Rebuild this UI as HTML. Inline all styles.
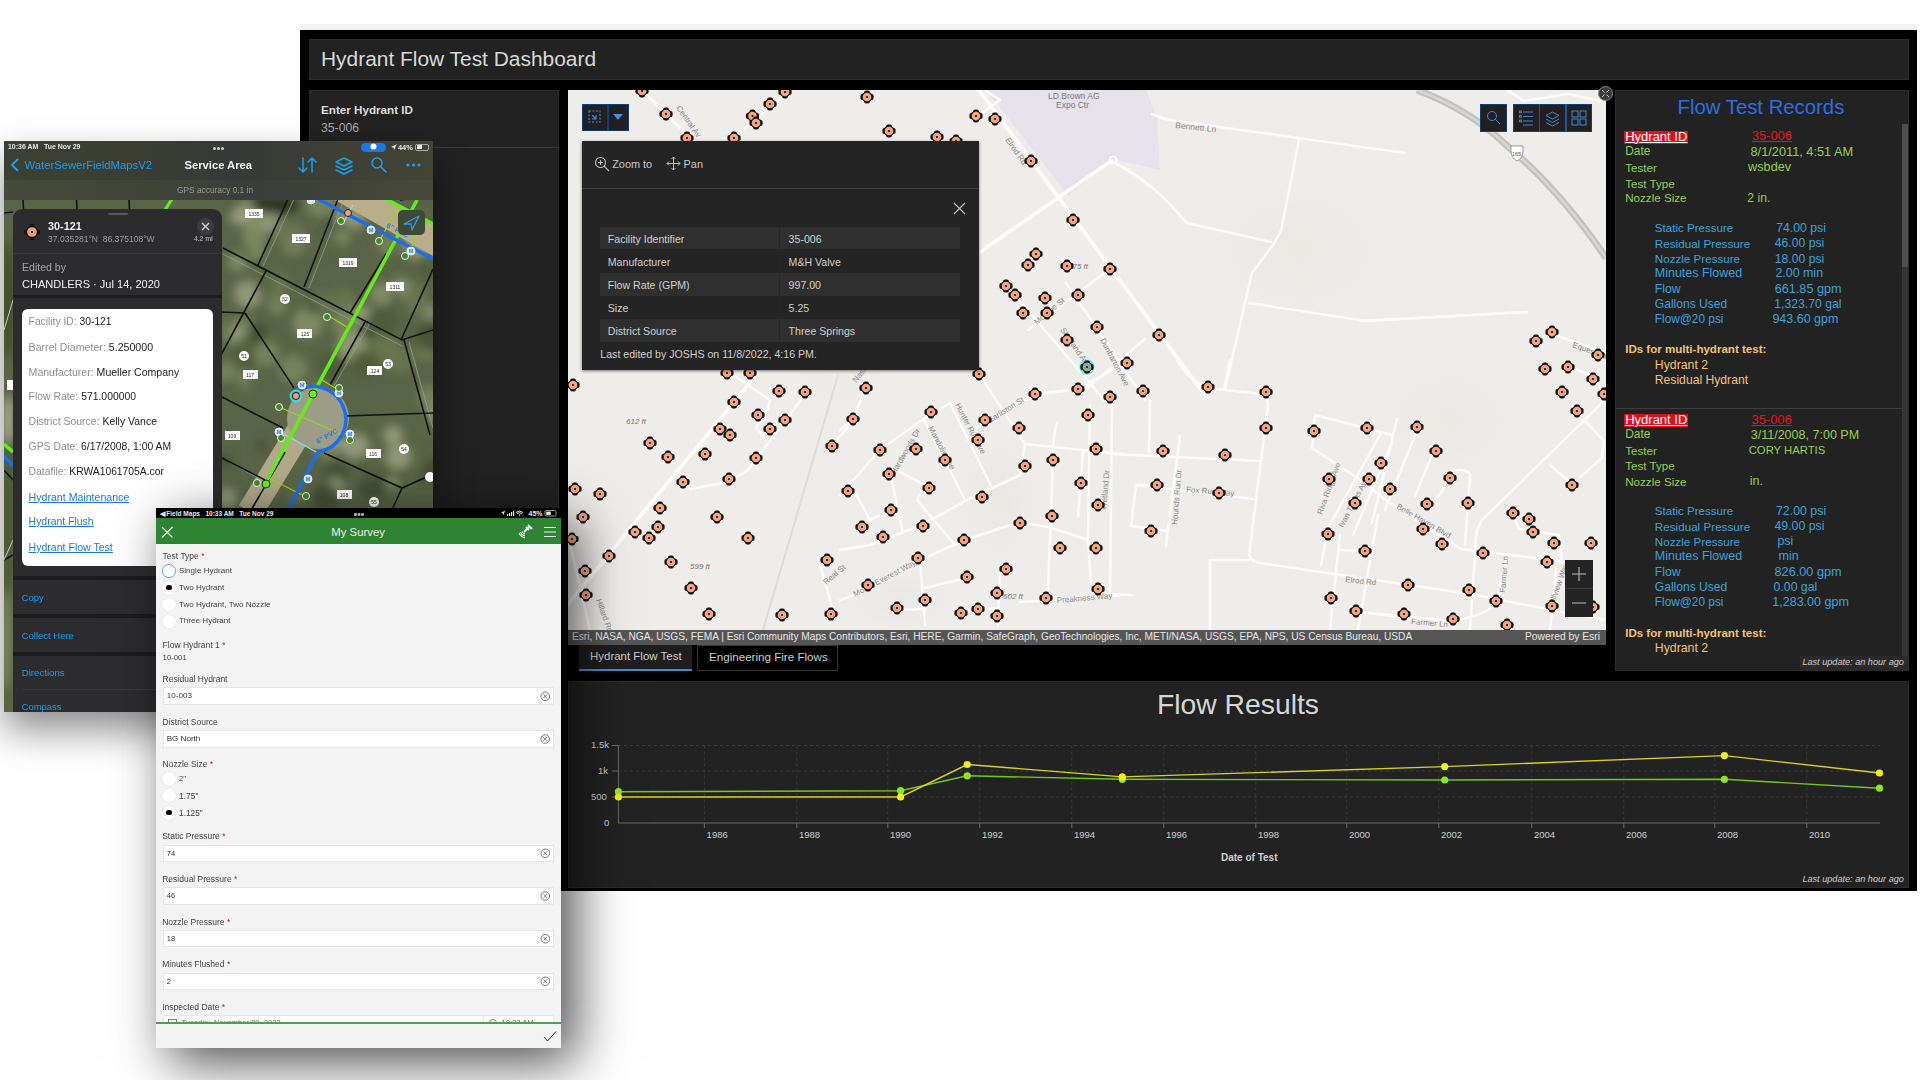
<!DOCTYPE html>
<html><head><meta charset="utf-8">
<style>
*{margin:0;padding:0;box-sizing:border-box}
html,body{width:1920px;height:1080px;overflow:hidden;background:#fff;font-family:"Liberation Sans",sans-serif}
.a{position:absolute}
.t{position:absolute;white-space:nowrap;line-height:1}
#dash{left:300px;top:30px;width:1617px;height:861px;background:#000}
#strip{left:300px;top:24px;width:1617px;height:6px;background:#f3f3f3}
.pn{background:#222222;box-shadow:inset 0 0 0 1px #2c2c2c}
</style></head><body>
<div class="a" id="strip"></div>
<div class="a" id="dash"></div>
<!-- header -->
<div class="a pn" style="left:309px;top:39px;width:1600px;height:41px"></div>
<div class="t" style="left:321px;top:49.3px;font-size:20.91px;color:#d9d9d9">Hydrant Flow Test Dashboard</div>
<!-- left panel -->
<div class="a pn" style="left:309px;top:90px;width:250px;height:798px"></div>
<div class="a" style="left:309px;top:147px;width:250px;height:1px;background:#3a3a3a"></div>
<div class="t" style="left:321px;top:103.9px;font-size:11.67px;font-weight:bold;color:#dcdcdc">Enter Hydrant ID</div>
<div class="t" style="left:321px;top:122.2px;font-size:12.22px;color:#a8a8a8">35-006</div>
<!-- map -->
<svg class="a" style="left:568px;top:90px" width="1038" height="540" viewBox="568 90 1038 540">
<defs><radialGradient id="hs"><stop offset="0" stop-color="#d8d7d2" stop-opacity=".25"/><stop offset="1" stop-color="#d8d7d2" stop-opacity="0"/></radialGradient>
<g id="hy"><rect x="-2.9" y="-6.6" width="5.8" height="13.2" rx="2" fill="#111"/><rect x="-6.6" y="-2.9" width="13.2" height="5.8" rx="2" fill="#111"/><circle r="5.4" fill="#151515"/><circle r="4.3" fill="#f6a584"/><circle r="1.1" fill="#111"/></g></defs>
<rect x="568" y="90" width="1038" height="540" fill="#eeede9"/>
<ellipse cx="580" cy="560" rx="40" ry="90" fill="url(#hs)"/>
<ellipse cx="840" cy="300" rx="60" ry="120" fill="url(#hs)"/>
<ellipse cx="1000" cy="500" rx="40" ry="60" fill="url(#hs)"/>
<ellipse cx="1300" cy="250" rx="80" ry="60" fill="url(#hs)"/>
<ellipse cx="700" cy="200" rx="90" ry="60" fill="url(#hs)"/>
<ellipse cx="1450" cy="420" rx="60" ry="50" fill="url(#hs)"/>
<ellipse cx="900" cy="600" rx="50" ry="30" fill="url(#hs)"/>
<path d="M985 90 L1146 90 L1157 117 L1160 170 L1113 159 L1068 196 L996 102 Z" fill="#e6e2ec"/>
<path d="M838 375 L763 630" stroke="#dcdcd8" stroke-width="2" fill="none"/>
<path d="M1417 90 Q1470 110 1505 144 Q1560 190 1606 258" stroke="#c2c2c0" stroke-width="7" fill="none"/>
<path d="M1417 90 Q1470 110 1505 144 Q1560 190 1606 258" stroke="#d6d6d4" stroke-width="2.5" fill="none"/>
<g fill="none" stroke="#fbfbfa" stroke-linecap="round" stroke-linejoin="round">
<path d="M758 373 L573 598 L560 614" stroke-width="3.8"/>
<path d="M979 90 L1207 398" stroke-width="3.8"/>
<path d="M960 266 L1111 161" stroke-width="3.8"/>
<path d="M642 90 L694 142" stroke-width="2.6"/>
<path d="M734 138 L793 88" stroke-width="2.6"/>
<path d="M733 375 L770 400 L768 408 L756 428 L763 435" stroke-width="2.6"/>
<path d="M803 397 L748 470 L728 482 L690 489" stroke-width="2.6"/>
<path d="M850 425 L830 448" stroke-width="2.6"/>
<path d="M820 565 L833 610" stroke-width="2.6"/>
<path d="M568 535 L590 630" stroke-width="2.6"/>
<path d="M840 600 L855 595 L920 560 L965 540 L1020 522 L1052 528 L1088 540" stroke-width="2.6"/>
<path d="M840 430 L853 419 L866 388" stroke-width="2.6"/>
<path d="M840 495 L880 450 L922 420 L950 403 L992 488" stroke-width="2.6"/>
<path d="M976 428 L1035 395 L1078 389 L1122 365" stroke-width="2.6"/>
<path d="M979 374 L1025 444 L1122 454" stroke-width="2.6"/>
<path d="M1025 444 L1020 475 L967 500 L922 525 L870 545 L840 550" stroke-width="2.6"/>
<path d="M924 420 L965 500" stroke-width="2.6"/>
<path d="M890 472 L903 533" stroke-width="2.6"/>
<path d="M900 472 L925 485 L917 500 L955 545" stroke-width="2.6"/>
<path d="M1057 423 Q1052 440 1053 460 L1048 590" stroke-width="2.6"/>
<path d="M1083 452 L1078 516" stroke-width="2.6"/>
<path d="M1090 405 L1088 540 L1092 598" stroke-width="2.6"/>
<path d="M1020 602 L1122 595" stroke-width="2.6"/>
<path d="M920 560 L925 625" stroke-width="2.6"/>
<path d="M925 588 L965 578" stroke-width="2.6"/>
<path d="M898 610 L925 609" stroke-width="2.6"/>
<path d="M1000 572 L998 625" stroke-width="2.6"/>
<path d="M960 612 L995 608" stroke-width="2.6"/>
<path d="M855 492 L870 520 L890 510" stroke-width="2.6"/>
<path d="M1177 360 Q1190 382 1208 388 L1262 394 Q1268 398 1268 405 L1249 555 Q1252 562 1260 563 L1470 594 L1604 620" stroke-width="2.6"/>
<path d="M1110 454 L1260 461" stroke-width="2.6"/>
<path d="M1230 360 L1224 389" stroke-width="2.6"/>
<path d="M1150 400 L1149 452" stroke-width="2.6"/>
<path d="M1112 405 L1110 595" stroke-width="2.6"/>
<path d="M1160 485 L1136 485 L1131 526 L1168 531" stroke-width="2.6"/>
<path d="M1136 485 L1254 499" stroke-width="2.6"/>
<path d="M1180 436 L1166 546" stroke-width="2.6"/>
<path d="M1210 560 L1210 630" stroke-width="2.6"/>
<path d="M1210 560 L1249 560" stroke-width="2.6"/>
<path d="M1110 594 L1132 595" stroke-width="2.6"/>
<path d="M1315 415 L1392 435" stroke-width="2.6"/>
<path d="M1315 415 L1312 448 L1365 483 L1384 499 L1461 549 L1550 560 L1570 563" stroke-width="2.6"/>
<path d="M1380 435 L1328 528 L1321 565" stroke-width="2.6"/>
<path d="M1392 443 L1353 535" stroke-width="2.6"/>
<path d="M1340 535 L1330 630" stroke-width="2.6"/>
<path d="M1378 515 L1358 630" stroke-width="2.6"/>
<path d="M1340 550 L1365 551" stroke-width="2.6"/>
<path d="M1362 612 L1420 620" stroke-width="2.6"/>
<path d="M1604 401 L1482 520 Q1476 530 1476 538 L1470 630" stroke-width="2.6"/>
<path d="M1360 321 L1527 312" stroke-width="2.6"/>
<path d="M1360 612 L1452 621 Q1490 615 1498 600 L1507 554" stroke-width="2.6"/>
<path d="M1552 334 L1604 352" stroke-width="2.6"/>
<path d="M1568 366 L1592 376 L1604 392" stroke-width="2.6"/>
<path d="M1586 422 L1604 441 L1602 458 L1580 477" stroke-width="2.6"/>
<path d="M1550 465 L1571 483" stroke-width="2.6"/>
<path d="M1513 514 L1519 529 L1559 535 L1562 563" stroke-width="2.6"/>
<path d="M1556 569 L1550 630" stroke-width="2.6"/>
<path d="M1397 419 L1372 523" stroke-width="2.6"/>
<path d="M1418 428 L1385 510" stroke-width="2.6"/>
<path d="M1433 453 L1415 496" stroke-width="2.6"/>
<path d="M1452 471 Q1465 468 1470 474 L1465 545" stroke-width="2.6"/>
<path d="M1451 478 L1436 499" stroke-width="2.6"/>
<path d="M1152 114 Q1165 120 1177 121 L1405 153" stroke-width="2.6"/>
<path d="M1299 140 L1281 231 L1273 245 L1252 273 L1225 389" stroke-width="2.6"/>
<path d="M1111 161 Q1140 175 1166 200 L1187 223 L1271 242" stroke-width="2.6"/>
<path d="M1249 303 L1366 321 L1527 312" stroke-width="2.6"/>
<path d="M1507 90 L1524 101 L1568 94" stroke-width="2.6"/>
<path d="M1568 94 L1606 102" stroke-width="2.6"/>
<path d="M978 116 L1000 100" stroke-width="2.6"/>
<path d="M1028 330 L1110 269" stroke-width="2.6"/>
<path d="M1005 283 L1104 400" stroke-width="2.6"/>
<path d="M1066 283 L1145 400" stroke-width="2.6"/>
<path d="M1145 339 L1087 388 L1034 394" stroke-width="2.6"/>
<path d="M1000 100 L985 90" stroke-width="2.6"/>
</g>
<circle cx="1113" cy="160" r="3.5" fill="none" stroke="#fbfbfa" stroke-width="2"/>
<g font-family="Liberation Sans" fill="#8a8a8a">
<text x="1175" y="128" font-size="8.5" transform="rotate(6 1175 128)">Bennett Ln</text>
<text x="1005" y="140" font-size="8" transform="rotate(55 1005 140)">Elrod Rd</text>
<text x="990" y="423" font-size="8" transform="rotate(-32 990 423)">Earliston St</text>
<text x="955" y="405" font-size="8" transform="rotate(62 955 405)">Hunter Run Ave</text>
<text x="928" y="428" font-size="8" transform="rotate(62 928 428)">Mandolin Ave</text>
<text x="895" y="475" font-size="8" transform="rotate(-60 895 475)">Hardwoods Dr</text>
<text x="855" y="597" font-size="8" transform="rotate(-28 855 597)">Mount Everest Way</text>
<text x="1057" y="603" font-size="8" transform="rotate(-5 1057 603)">Preakness Way</text>
<text x="1106" y="510" font-size="8" transform="rotate(-85 1106 510)">Wetland Dr</text>
<text x="1100" y="340" font-size="8" transform="rotate(62 1100 340)">Dunbarton Ave</text>
<text x="1060" y="330" font-size="8" transform="rotate(55 1060 330)">Shetland Ave</text>
<text x="1037" y="325" font-size="8" transform="rotate(-40 1037 325)">Monroe St</text>
<text x="1186" y="492" font-size="8" transform="rotate(5 1186 492)">Fox Run Way</text>
<text x="1177" y="525" font-size="8" transform="rotate(-85 1177 525)">Hounds Run Dr</text>
<text x="1345" y="582" font-size="8" transform="rotate(6 1345 582)">Elrod Rd</text>
<text x="1322" y="515" font-size="8" transform="rotate(-70 1322 515)">Riva Ridge Ave</text>
<text x="1343" y="528" font-size="8" transform="rotate(-62 1343 528)">Ivan Towns Ave</text>
<text x="1396" y="508" font-size="8" transform="rotate(30 1396 508)">Belle Haven Blvd</text>
<text x="1411" y="624" font-size="8" transform="rotate(5 1411 624)">Farmer Ln</text>
<text x="1505" y="593" font-size="8" transform="rotate(-85 1505 593)">Farmer Ln</text>
<text x="1552" y="610" font-size="8" transform="rotate(-70 1552 610)">Golfview Way</text>
<text x="1572" y="347" font-size="8" transform="rotate(20 1572 347)">Equestrian</text>
<text x="676" y="108" font-size="8" transform="rotate(55 676 108)">Central Av</text>
<text x="596" y="600" font-size="8" transform="rotate(70 596 600)">Hillard Rd</text>
<text x="826" y="585" font-size="8" transform="rotate(-40 826 585)">Real St</text>
<text x="856" y="383" font-size="8" transform="rotate(-50 856 383)">Nash</text>
<text x="1048" y="99" font-size="8.5" fill="#777">LD Brown AG</text><text x="1056" y="108" font-size="8.5" fill="#777">Expo Ctr</text>
<text x="626" y="424" font-size="8" font-style="italic" fill="#777">612 ft</text><text x="690" y="569" font-size="8" font-style="italic" fill="#777">599 ft</text>
<text x="1003" y="599" font-size="8" font-style="italic" fill="#777">602 ft</text><text x="1068" y="269" font-size="8" font-style="italic" fill="#777">675 ft</text>
</g>
<path d="M1511 146 h12 v4 q0 8 -6 11 q-6 -3 -6 -11 z" fill="#fff" stroke="#888" stroke-width=".8"/><text x="1512" y="156" font-size="5.5" font-family="Liberation Sans" fill="#555">165</text>
<use href="#hy" x="727" y="373"/><use href="#hy" x="750" y="373"/><use href="#hy" x="573" y="385"/><use href="#hy" x="779" y="391"/><use href="#hy" x="805" y="392"/><use href="#hy" x="866" y="388"/><use href="#hy" x="979" y="374"/><use href="#hy" x="734" y="402"/><use href="#hy" x="758" y="415"/><use href="#hy" x="785" y="420"/><use href="#hy" x="770" y="429"/><use href="#hy" x="720" y="429"/><use href="#hy" x="730" y="435"/><use href="#hy" x="650" y="443"/><use href="#hy" x="668" y="457"/><use href="#hy" x="705" y="454"/><use href="#hy" x="756" y="458"/><use href="#hy" x="853" y="419"/><use href="#hy" x="832" y="446"/><use href="#hy" x="880" y="450"/><use href="#hy" x="916" y="449"/><use href="#hy" x="931" y="412"/><use href="#hy" x="985" y="420"/><use href="#hy" x="1035" y="394"/><use href="#hy" x="1078" y="389"/><use href="#hy" x="1088" y="415"/><use href="#hy" x="1019" y="428"/><use href="#hy" x="1096" y="449"/><use href="#hy" x="978" y="440"/><use href="#hy" x="945" y="460"/><use href="#hy" x="1053" y="460"/><use href="#hy" x="1025" y="466"/><use href="#hy" x="1081" y="483"/><use href="#hy" x="729" y="479"/><use href="#hy" x="683" y="482"/><use href="#hy" x="575" y="489"/><use href="#hy" x="600" y="494"/><use href="#hy" x="889" y="474"/><use href="#hy" x="848" y="491"/><use href="#hy" x="929" y="488"/><use href="#hy" x="982" y="497"/><use href="#hy" x="660" y="508"/><use href="#hy" x="583" y="517"/><use href="#hy" x="717" y="517"/><use href="#hy" x="891" y="510"/><use href="#hy" x="862" y="527"/><use href="#hy" x="923" y="526"/><use href="#hy" x="883" y="537"/><use href="#hy" x="964" y="540"/><use href="#hy" x="1020" y="523"/><use href="#hy" x="1052" y="516"/><use href="#hy" x="1098" y="505"/><use href="#hy" x="635" y="532"/><use href="#hy" x="658" y="527"/><use href="#hy" x="649" y="538"/><use href="#hy" x="572" y="539"/><use href="#hy" x="748" y="538"/><use href="#hy" x="609" y="556"/><use href="#hy" x="671" y="562"/><use href="#hy" x="827" y="560"/><use href="#hy" x="918" y="558"/><use href="#hy" x="1060" y="548"/><use href="#hy" x="1096" y="548"/><use href="#hy" x="585" y="571"/><use href="#hy" x="1006" y="569"/><use href="#hy" x="967" y="577"/><use href="#hy" x="868" y="585"/><use href="#hy" x="691" y="588"/><use href="#hy" x="586" y="595"/><use href="#hy" x="997" y="593"/><use href="#hy" x="1046" y="598"/><use href="#hy" x="1098" y="589"/><use href="#hy" x="925" y="600"/><use href="#hy" x="897" y="608"/><use href="#hy" x="961" y="613"/><use href="#hy" x="978" y="609"/><use href="#hy" x="997" y="616"/><use href="#hy" x="709" y="614"/><use href="#hy" x="782" y="615"/><use href="#hy" x="831" y="614"/><use href="#hy" x="1127" y="363"/><use href="#hy" x="1208" y="387"/><use href="#hy" x="1266" y="392"/><use href="#hy" x="1143" y="391"/><use href="#hy" x="1110" y="397"/><use href="#hy" x="1266" y="428"/><use href="#hy" x="1314" y="431"/><use href="#hy" x="1367" y="428"/><use href="#hy" x="1417" y="427"/><use href="#hy" x="1436" y="451"/><use href="#hy" x="1163" y="451"/><use href="#hy" x="1225" y="455"/><use href="#hy" x="1381" y="463"/><use href="#hy" x="1329" y="479"/><use href="#hy" x="1369" y="479"/><use href="#hy" x="1390" y="489"/><use href="#hy" x="1450" y="478"/><use href="#hy" x="1572" y="485"/><use href="#hy" x="1577" y="411"/><use href="#hy" x="1562" y="392"/><use href="#hy" x="1593" y="379"/><use href="#hy" x="1545" y="369"/><use href="#hy" x="1568" y="367"/><use href="#hy" x="1604" y="394"/><use href="#hy" x="1157" y="485"/><use href="#hy" x="1219" y="493"/><use href="#hy" x="1355" y="503"/><use href="#hy" x="1427" y="504"/><use href="#hy" x="1468" y="503"/><use href="#hy" x="1513" y="513"/><use href="#hy" x="1529" y="519"/><use href="#hy" x="1533" y="532"/><use href="#hy" x="1423" y="529"/><use href="#hy" x="1328" y="534"/><use href="#hy" x="1151" y="531"/><use href="#hy" x="1442" y="544"/><use href="#hy" x="1365" y="551"/><use href="#hy" x="1483" y="553"/><use href="#hy" x="1554" y="543"/><use href="#hy" x="1591" y="543"/><use href="#hy" x="1547" y="562"/><use href="#hy" x="1408" y="585"/><use href="#hy" x="1469" y="590"/><use href="#hy" x="1331" y="598"/><use href="#hy" x="1496" y="601"/><use href="#hy" x="1552" y="606"/><use href="#hy" x="1593" y="607"/><use href="#hy" x="1356" y="611"/><use href="#hy" x="1404" y="614"/><use href="#hy" x="1453" y="619"/><use href="#hy" x="1507" y="625"/><use href="#hy" x="976" y="116"/><use href="#hy" x="995" y="119"/><use href="#hy" x="1031" y="161"/><use href="#hy" x="1073" y="220"/><use href="#hy" x="1036" y="254"/><use href="#hy" x="1028" y="265"/><use href="#hy" x="1067" y="266"/><use href="#hy" x="1110" y="269"/><use href="#hy" x="1006" y="286"/><use href="#hy" x="1015" y="295"/><use href="#hy" x="1045" y="298"/><use href="#hy" x="1078" y="295"/><use href="#hy" x="1023" y="313"/><use href="#hy" x="1047" y="313"/><use href="#hy" x="1097" y="327"/><use href="#hy" x="1159" y="335"/><use href="#hy" x="1067" y="340"/><use href="#hy" x="1552" y="332"/><use href="#hy" x="1536" y="341"/><use href="#hy" x="1598" y="355"/><use href="#hy" x="642" y="91"/><use href="#hy" x="666" y="114"/><use href="#hy" x="687" y="138"/><use href="#hy" x="734" y="138"/><use href="#hy" x="770" y="104"/><use href="#hy" x="785" y="92"/><use href="#hy" x="867" y="97"/><use href="#hy" x="889" y="131"/><use href="#hy" x="937" y="137"/><use href="#hy" x="752.5" y="116"/><use href="#hy" x="756" y="123"/><use href="#hy" x="956" y="141"/>
<circle cx="1087" cy="367" r="7.5" fill="#30e8f0" opacity=".85"/><use href="#hy" x="1087" y="367"/><circle cx="1087" cy="367" r="4.2" fill="#9aa88a"/><circle cx="1087" cy="367" r="1.1" fill="#111"/>
</svg>
<div class="a" style="left:568px;top:630px;width:1038px;height:15px;background:#555"></div>
<div class="t" style="left:572px;top:632.4px;font-size:10.19px;color:#e8e8e8">Esri, NASA, NGA, USGS, FEMA | Esri Community Maps Contributors, Esri, HERE, Garmin, SafeGraph, GeoTechnologies, Inc, METI/NASA, USGS, EPA, NPS, US Census Bureau, USDA</div>
<div class="t" style="left:1525px;top:632.3px;font-size:10.3px;color:#e8e8e8">Powered by Esri</div>
<!-- popup -->
<div class="a" style="left:581.7px;top:141px;width:397px;height:229.3px;background:#242424;box-shadow:0 1px 3px rgba(0,0,0,.5)"></div>
<svg class="a" style="left:594px;top:156px" width="16" height="16" viewBox="0 0 16 16"><g fill="none" stroke="#bdbdbd" stroke-width="1.1"><circle cx="6.5" cy="6.5" r="5"/><path d="M10 10 L15 15 M4 6.5 H9 M6.5 4 V9"/></g></svg>
<div class="t" style="left:612.2px;top:158.8px;font-size:10.9px;color:#c8c8c8">Zoom to</div>
<svg class="a" style="left:666px;top:156px" width="15" height="15" viewBox="0 0 15 15"><g fill="none" stroke="#bdbdbd" stroke-width="1"><path d="M7.5 1 V14 M1 7.5 H14 M5.5 3 L7.5 1 L9.5 3 M5.5 12 L7.5 14 L9.5 12 M3 5.5 L1 7.5 L3 9.5 M12 5.5 L14 7.5 L12 9.5"/></g></svg>
<div class="t" style="left:683.6px;top:158.8px;font-size:10.9px;color:#c8c8c8">Pan</div>
<div class="a" style="left:582px;top:188px;width:396px;height:1px;background:#3c3c3c"></div>
<svg class="a" style="left:952px;top:201px" width="15" height="15" viewBox="0 0 15 15"><path d="M2 2 L13 13 M13 2 L2 13" stroke="#bdbdbd" stroke-width="1.2"/></svg>
<div class="a" style="left:600.3px;top:226.7px;width:359.7px;height:22.7px;background:#2f2f2f"></div>
<div class="a" style="left:600.3px;top:272.5px;width:359.7px;height:23.3px;background:#2f2f2f"></div>
<div class="a" style="left:600.3px;top:318.9px;width:359.7px;height:23.6px;background:#2f2f2f"></div>
<div class="a" style="left:779.4px;top:226.7px;width:1px;height:115.8px;background:#262626"></div>
<div class="t" style="left:607.8px;top:233.5px;font-size:10.6px;color:#cfcfcf">Facility Identifier</div>
<div class="t" style="left:788.6px;top:233.5px;font-size:10.6px;color:#cfcfcf">35-006</div>
<div class="t" style="left:607.8px;top:256.6px;font-size:10.6px;color:#cfcfcf">Manufacturer</div>
<div class="t" style="left:788.6px;top:256.6px;font-size:10.6px;color:#cfcfcf">M&amp;H Valve</div>
<div class="t" style="left:607.8px;top:279.9px;font-size:10.6px;color:#cfcfcf">Flow Rate (GPM)</div>
<div class="t" style="left:788.6px;top:279.9px;font-size:10.6px;color:#cfcfcf">997.00</div>
<div class="t" style="left:607.8px;top:303.0px;font-size:10.6px;color:#cfcfcf">Size</div>
<div class="t" style="left:788.6px;top:303.0px;font-size:10.6px;color:#cfcfcf">5.25</div>
<div class="t" style="left:607.8px;top:326.0px;font-size:10.6px;color:#cfcfcf">District Source</div>
<div class="t" style="left:788.6px;top:326.0px;font-size:10.6px;color:#cfcfcf">Three Springs</div>
<div class="t" style="left:600.3px;top:348.8px;font-size:10.6px;color:#cfcfcf">Last edited by JOSHS on 11/8/2022, 4:16 PM.</div>
<!-- toolbar -->
<div class="a" style="left:581.7px;top:103.6px;width:47.7px;height:27.8px;background:#211f1f;border:1.5px solid #0d3f74"></div>
<div class="a" style="left:607px;top:104px;width:1.5px;height:27px;background:#0d3f74"></div>
<svg class="a" style="left:587px;top:109px" width="16" height="16" viewBox="0 0 16 16"><g fill="none" stroke="#3a8ee8" stroke-width="1.1"><rect x="2" y="2" width="11" height="11" stroke-dasharray="2 1.5"/><path d="M5 6 L9 10 M9 6 L9 10 L5 10"/></g></svg>
<svg class="a" style="left:612px;top:113px" width="12" height="8" viewBox="0 0 12 8"><path d="M1 1 L11 1 L6 7 Z" fill="#3a8ee8"/></svg>
<div class="a" style="left:1480px;top:104px;width:27px;height:28px;background:#211f1f;border:1.5px solid #0d3f74"></div>
<svg class="a" style="left:1484px;top:108px" width="20" height="20" viewBox="0 0 20 20"><g fill="none" stroke="#4a88d0" stroke-width="1"><circle cx="8" cy="8" r="4.5"/><path d="M11.5 11.5 L16 16"/></g></svg>
<div class="a" style="left:1513px;top:104px;width:79px;height:28px;background:#211f1f;border:1.5px solid #0d3f74"></div>
<div class="a" style="left:1538.7px;top:104px;width:1.5px;height:28px;background:#1a5a9a"></div>
<div class="a" style="left:1565px;top:104px;width:1.5px;height:28px;background:#1a5a9a"></div>
<svg class="a" style="left:1513px;top:104px" width="79" height="28" viewBox="0 0 79 28"><g fill="none" stroke="#4a90e0" stroke-width=".9">
<path d="M10 8 H20 M10 12.5 H20 M10 17 H20 M10 21 H20"/><rect x="6.5" y="7" width="1.8" height="1.8"/><rect x="6.5" y="11.5" width="1.8" height="1.8"/><rect x="6.5" y="16" width="1.8" height="1.8"/>
<path d="M39.5 8 L46 11.5 L39.5 15 L33 11.5 Z M33 15 L39.5 18.5 L46 15 M33 18.5 L39.5 22 L46 18.5"/>
<rect x="59" y="7" width="6" height="6"/><rect x="67" y="7" width="6" height="6"/><rect x="59" y="15" width="6" height="6"/><rect x="67" y="15" width="6" height="6"/>
</g></svg>
<div class="a" style="left:1598px;top:86px;width:15px;height:15px;border-radius:50%;background:#3a3a3a;border:1px solid #888"></div>
<svg class="a" style="left:1598px;top:86px" width="15" height="15" viewBox="0 0 15 15"><path d="M4 4 L6.5 6.5 M11 4 L8.5 6.5 M4 11 L6.5 8.5 M11 11 L8.5 8.5" stroke="#ccc" stroke-width="1"/></svg>
<!-- map zoom -->
<div class="a" style="left:1565px;top:560px;width:28px;height:57px;background:#242424"></div>
<div class="a" style="left:1565px;top:588px;width:28px;height:1px;background:#3a3a3a"></div>
<svg class="a" style="left:1565px;top:560px" width="28" height="57" viewBox="0 0 28 57"><path d="M14 7 V21 M7 14 H21 M7 43 H21" stroke="#bbb" stroke-width="1.1"/></svg>
<!-- right panel -->
<div class="a pn" style="left:1615px;top:90px;width:294px;height:580.5px"></div>
<div class="t" style="left:1677.6px;top:96.8px;font-size:20.32px;color:#2f6de0">Flow Test Records</div>
<div class="a" style="left:1901.6px;top:124.4px;width:6.5px;height:534px;background:#353535"></div>
<div class="a" style="left:1901.6px;top:124.4px;width:6.5px;height:142.3px;background:#4e4e4e"></div>
<div class="a" style="left:1615px;top:408.2px;width:287px;height:1px;background:#3d3d3d"></div>
<div class="a" style="left:1624.2px;top:131px;width:64px;height:12.7px;background:#e0101a"></div>
<div class="a" style="left:1624.4px;top:413.5px;width:63.4px;height:13.2px;background:#e0101a"></div>
<div class="a" style="left:1799.5px;top:656.4px;width:109px;height:14.3px;background:#2a2a2a"></div>
<div class="t" style="left:1625.2px;top:129.7px;font-size:13.01px;color:#fff;text-decoration:underline">Hydrant ID</div>
<div class="t" style="left:1751.7px;top:129.7px;font-size:12.94px;color:#e8101a;text-decoration:underline">35-006</div>
<div class="t" style="left:1625.2px;top:146.3px;font-size:11.92px;color:#96d04a">Date</div>
<div class="t" style="left:1625.2px;top:162.0px;font-size:11.64px;color:#96d04a">Tester</div>
<div class="t" style="left:1625.2px;top:177.5px;font-size:11.61px;color:#96d04a">Test Type</div>
<div class="t" style="left:1625.2px;top:192.2px;font-size:11.61px;color:#96d04a">Nozzle Size</div>
<div class="t" style="left:1750.5px;top:145.6px;font-size:12.78px;color:#96d04a">8/1/2011, 4:51 AM</div>
<div class="t" style="left:1748.1px;top:161.2px;font-size:12.68px;color:#96d04a">wsbdev</div>
<div class="t" style="left:1747.3px;top:191.7px;font-size:12.22px;color:#96d04a">2 in.</div>
<div class="t" style="left:1654.8px;top:222.8px;font-size:11.58px;color:#3aa2da">Static Pressure</div>
<div class="t" style="left:1654.8px;top:237.8px;font-size:11.68px;color:#3aa2da">Residual Pressure</div>
<div class="t" style="left:1654.8px;top:253.0px;font-size:11.63px;color:#3aa2da">Nozzle Pressure</div>
<div class="t" style="left:1654.8px;top:267.3px;font-size:12.48px;color:#3aa2da">Minutes Flowed</div>
<div class="t" style="left:1654.8px;top:283.0px;font-size:12.21px;color:#3aa2da">Flow</div>
<div class="t" style="left:1654.8px;top:298.2px;font-size:12.09px;color:#3aa2da">Gallons Used</div>
<div class="t" style="left:1654.8px;top:313.9px;font-size:11.85px;color:#3aa2da">Flow@20 psi</div>
<div class="t" style="left:1776.3px;top:222.2px;font-size:12.24px;color:#3aa2da">74.00 psi</div>
<div class="t" style="left:1774.8px;top:237.4px;font-size:12.19px;color:#3aa2da">46.00 psi</div>
<div class="t" style="left:1774.8px;top:252.5px;font-size:12.19px;color:#3aa2da">18.00 psi</div>
<div class="t" style="left:1775.4px;top:267.4px;font-size:12.43px;color:#3aa2da">2.00 min</div>
<div class="t" style="left:1774.8px;top:282.6px;font-size:12.63px;color:#3aa2da">661.85 gpm</div>
<div class="t" style="left:1774.2px;top:298.1px;font-size:12.22px;color:#3aa2da">1,323.70 gal</div>
<div class="t" style="left:1772.4px;top:313.3px;font-size:12.51px;color:#3aa2da">943.60 gpm</div>
<div class="t" style="left:1625.2px;top:344.2px;font-size:11.56px;font-weight:bold;color:#f2c374">IDs for multi-hydrant test:</div>
<div class="t" style="left:1654.8px;top:359.1px;font-size:12.29px;color:#f2c374">Hydrant 2</div>
<div class="t" style="left:1654.8px;top:374.3px;font-size:12.16px;color:#f2c374">Residual Hydrant</div>
<div class="t" style="left:1625.2px;top:413.4px;font-size:13.01px;color:#fff;text-decoration:underline">Hydrant ID</div>
<div class="t" style="left:1751.5px;top:413.5px;font-size:12.91px;color:#e8101a;text-decoration:underline">35-006</div>
<div class="t" style="left:1625.2px;top:429.3px;font-size:11.92px;color:#96d04a">Date</div>
<div class="t" style="left:1625.2px;top:445.0px;font-size:11.64px;color:#96d04a">Tester</div>
<div class="t" style="left:1625.2px;top:460.0px;font-size:11.61px;color:#96d04a">Test Type</div>
<div class="t" style="left:1625.2px;top:475.5px;font-size:11.61px;color:#96d04a">Nozzle Size</div>
<div class="t" style="left:1750.7px;top:428.8px;font-size:12.54px;color:#96d04a">3/11/2008, 7:00 PM</div>
<div class="t" style="left:1748.7px;top:445.3px;font-size:11.3px;color:#96d04a">CORY HARTIS</div>
<div class="t" style="left:1749.8px;top:474.7px;font-size:12.49px;color:#96d04a">in.</div>
<div class="t" style="left:1654.8px;top:505.9px;font-size:11.58px;color:#3aa2da">Static Pressure</div>
<div class="t" style="left:1654.8px;top:520.7px;font-size:11.68px;color:#3aa2da">Residual Pressure</div>
<div class="t" style="left:1654.8px;top:536.1px;font-size:11.63px;color:#3aa2da">Nozzle Pressure</div>
<div class="t" style="left:1654.8px;top:550.4px;font-size:12.48px;color:#3aa2da">Minutes Flowed</div>
<div class="t" style="left:1654.8px;top:566.3px;font-size:12.21px;color:#3aa2da">Flow</div>
<div class="t" style="left:1654.8px;top:581.3px;font-size:12.09px;color:#3aa2da">Gallons Used</div>
<div class="t" style="left:1654.8px;top:596.7px;font-size:11.85px;color:#3aa2da">Flow@20 psi</div>
<div class="t" style="left:1776.0px;top:505.2px;font-size:12.37px;color:#3aa2da">72.00 psi</div>
<div class="t" style="left:1774.5px;top:520.2px;font-size:12.32px;color:#3aa2da">49.00 psi</div>
<div class="t" style="left:1777.4px;top:535.4px;font-size:12.36px;color:#3aa2da">psi</div>
<div class="t" style="left:1778.5px;top:550.4px;font-size:12.47px;color:#3aa2da">min</div>
<div class="t" style="left:1774.5px;top:565.8px;font-size:12.72px;color:#3aa2da">826.00 gpm</div>
<div class="t" style="left:1773.6px;top:581.1px;font-size:12.28px;color:#3aa2da">0.00 gal</div>
<div class="t" style="left:1772.2px;top:596.1px;font-size:12.57px;color:#3aa2da">1,283.00 gpm</div>
<div class="t" style="left:1625.2px;top:627.6px;font-size:11.56px;font-weight:bold;color:#f2c374">IDs for multi-hydrant test:</div>
<div class="t" style="left:1654.8px;top:642.2px;font-size:12.29px;color:#f2c374">Hydrant 2</div>
<div class="t" style="left:1802.4px;top:657.8px;font-size:9.15px;font-style:italic;color:#cfcfcf">Last update: an hour ago</div>
<!-- tabs -->
<div class="a" style="left:579px;top:644.5px;width:113px;height:26.5px;background:#1e1e1e;border-bottom:2px solid #3b8de0"></div>
<div class="a" style="left:697px;top:644.5px;width:141px;height:26.5px;border:1px solid #333"></div>
<div class="t" style="left:590px;top:651px;font-size:11.47px;color:#cfcfcf">Hydrant Flow Test</div>
<div class="t" style="left:709px;top:650.8px;font-size:11.61px;color:#cfcfcf">Engineering Fire Flows</div>
<!-- chart panel -->
<div class="a pn" style="left:567.5px;top:680.5px;width:1341.5px;height:207px"></div>
<div class="t" style="left:1157px;top:689.8px;font-size:28.31px;color:#d6d6d6">Flow Results</div>
<svg class="a" style="left:567px;top:680px" width="1342" height="208" viewBox="567 680 1342 208">
<g stroke="#3a3a3a" stroke-width="1" stroke-dasharray="3 3" fill="none">
<path d="M618 745.5 H1880 M618 771 H1880 M618 797 H1880"/>
<path d="M704.4 745.5 V823"/><path d="M796.8 745.5 V823"/><path d="M887.8 745.5 V823"/><path d="M979.8 745.5 V823"/><path d="M1071.8 745.5 V823"/><path d="M1163.8 745.5 V823"/><path d="M1255.8 745.5 V823"/><path d="M1346.8 745.5 V823"/><path d="M1438.8 745.5 V823"/><path d="M1531.8 745.5 V823"/><path d="M1623.8 745.5 V823"/><path d="M1714.8 745.5 V823"/><path d="M1806.8 745.5 V823"/></g>
<g stroke="#6a6a6a" stroke-width="1"><path d="M618 823 H1880"/><path d="M618.4 745 V823"/><path d="M612 745.5 H618 M612 771 H618 M612 797 H618"/>
<path d="M704.4 823 V828"/><path d="M796.8 823 V828"/><path d="M887.8 823 V828"/><path d="M979.8 823 V828"/><path d="M1071.8 823 V828"/><path d="M1163.8 823 V828"/><path d="M1255.8 823 V828"/><path d="M1346.8 823 V828"/><path d="M1438.8 823 V828"/><path d="M1531.8 823 V828"/><path d="M1623.8 823 V828"/><path d="M1714.8 823 V828"/><path d="M1806.8 823 V828"/></g>
<polyline fill="none" stroke="#74c81c" stroke-width="1.4" points="618.4,791.7 900.6,790.7 967.2,775.8 1122.3,779.3 1444.7,780.0 1724.4,779.3 1879.5,788.2"/>
<polyline fill="none" stroke="#d8d21c" stroke-width="1.4" points="618.4,797.0 900.6,797.0 967.2,764.5 1122.3,776.9 1444.7,766.6 1724.4,755.6 1879.5,773.0"/>
<circle cx="618.4" cy="791.7" r="3.6" fill="#8ae81a"/><circle cx="900.6" cy="790.7" r="3.6" fill="#8ae81a"/><circle cx="967.2" cy="775.8" r="3.6" fill="#8ae81a"/><circle cx="1122.3" cy="779.3" r="3.6" fill="#8ae81a"/><circle cx="1444.7" cy="780.0" r="3.6" fill="#8ae81a"/><circle cx="1724.4" cy="779.3" r="3.6" fill="#8ae81a"/><circle cx="1879.5" cy="788.2" r="3.6" fill="#8ae81a"/>
<circle cx="618.4" cy="797.0" r="3.6" fill="#f2ee1a"/><circle cx="900.6" cy="797.0" r="3.6" fill="#f2ee1a"/><circle cx="967.2" cy="764.5" r="3.6" fill="#f2ee1a"/><circle cx="1122.3" cy="776.9" r="3.6" fill="#f2ee1a"/><circle cx="1444.7" cy="766.6" r="3.6" fill="#f2ee1a"/><circle cx="1724.4" cy="755.6" r="3.6" fill="#f2ee1a"/><circle cx="1879.5" cy="773.0" r="3.6" fill="#f2ee1a"/>
</svg>
<div class="t" style="left:591px;top:740px;font-size:9.5px;color:#cfcfcf">1.5k</div>
<div class="t" style="left:598px;top:766px;font-size:9.5px;color:#cfcfcf">1k</div>
<div class="t" style="left:591px;top:792px;font-size:9.5px;color:#cfcfcf">500</div>
<div class="t" style="left:604px;top:818px;font-size:9.5px;color:#cfcfcf">0</div>
<div class="t" style="left:706.6px;top:830px;font-size:9.5px;color:#cfcfcf">1986</div>
<div class="t" style="left:799.0px;top:830px;font-size:9.5px;color:#cfcfcf">1988</div>
<div class="t" style="left:890.0px;top:830px;font-size:9.5px;color:#cfcfcf">1990</div>
<div class="t" style="left:982.0px;top:830px;font-size:9.5px;color:#cfcfcf">1992</div>
<div class="t" style="left:1074.0px;top:830px;font-size:9.5px;color:#cfcfcf">1994</div>
<div class="t" style="left:1166.0px;top:830px;font-size:9.5px;color:#cfcfcf">1996</div>
<div class="t" style="left:1258.0px;top:830px;font-size:9.5px;color:#cfcfcf">1998</div>
<div class="t" style="left:1349.0px;top:830px;font-size:9.5px;color:#cfcfcf">2000</div>
<div class="t" style="left:1441.0px;top:830px;font-size:9.5px;color:#cfcfcf">2002</div>
<div class="t" style="left:1534.0px;top:830px;font-size:9.5px;color:#cfcfcf">2004</div>
<div class="t" style="left:1626.0px;top:830px;font-size:9.5px;color:#cfcfcf">2006</div>
<div class="t" style="left:1717.0px;top:830px;font-size:9.5px;color:#cfcfcf">2008</div>
<div class="t" style="left:1809.0px;top:830px;font-size:9.5px;color:#cfcfcf">2010</div>
<div class="t" style="left:1221px;top:853px;font-size:10px;font-weight:bold;color:#cfcfcf">Date of Test</div>
<div class="t" style="left:1802.4px;top:875px;font-size:9.15px;font-style:italic;color:#cfcfcf">Last update: an hour ago</div>
<!-- mobile app -->
<div class="a" style="left:4px;top:141px;width:429px;height:571px;background:#56604a;box-shadow:0 18px 36px rgba(0,0,0,.45)"></div>
<svg class="a" style="left:4px;top:141px" width="429" height="571" viewBox="4 141 429 571">
<defs>
<radialGradient id="g1" cx="50%" cy="50%" r="50%"><stop offset="0" stop-color="#a9aa90" stop-opacity=".9"/><stop offset="1" stop-color="#a9aa90" stop-opacity="0"/></radialGradient>
<radialGradient id="g2" cx="50%" cy="50%" r="50%"><stop offset="0" stop-color="#34402c" stop-opacity=".9"/><stop offset="1" stop-color="#34402c" stop-opacity="0"/></radialGradient>
<radialGradient id="g3" cx="50%" cy="50%" r="50%"><stop offset="0" stop-color="#7e876a" stop-opacity=".9"/><stop offset="1" stop-color="#7e876a" stop-opacity="0"/></radialGradient>
</defs>
<rect x="4" y="141" width="429" height="571" fill="#5a6547"/>
<filter id="bl" x="-50%" y="-50%" width="200%" height="200%"><feGaussianBlur stdDeviation="5"/></filter>
<g filter="url(#bl)">
<circle cx="293" cy="243" r="12" fill="#808c62" opacity=".75"/><circle cx="401" cy="225" r="11" fill="#6b7a50" opacity=".75"/><circle cx="269" cy="223" r="10" fill="#a2a886" opacity=".75"/><circle cx="242" cy="331" r="14" fill="#808c62" opacity=".75"/><circle cx="429" cy="397" r="11" fill="#808c62" opacity=".75"/><circle cx="348" cy="322" r="16" fill="#808c62" opacity=".75"/><circle cx="343" cy="238" r="10" fill="#6b7a50" opacity=".75"/><circle cx="248" cy="294" r="14" fill="#a2a886" opacity=".75"/><circle cx="244" cy="378" r="7" fill="#808c62" opacity=".75"/><circle cx="341" cy="215" r="6" fill="#a2a886" opacity=".75"/><circle cx="330" cy="365" r="14" fill="#4a5936" opacity=".75"/><circle cx="350" cy="340" r="8" fill="#56663e" opacity=".75"/><circle cx="261" cy="445" r="6" fill="#3c482c" opacity=".75"/><circle cx="336" cy="475" r="13" fill="#3c482c" opacity=".75"/><circle cx="355" cy="218" r="11" fill="#a2a886" opacity=".75"/><circle cx="387" cy="244" r="10" fill="#808c62" opacity=".75"/><circle cx="432" cy="220" r="11" fill="#56663e" opacity=".75"/><circle cx="413" cy="295" r="13" fill="#6b7a50" opacity=".75"/><circle cx="330" cy="450" r="6" fill="#808c62" opacity=".75"/><circle cx="428" cy="347" r="12" fill="#808c62" opacity=".75"/><circle cx="381" cy="294" r="11" fill="#8f9a70" opacity=".75"/><circle cx="401" cy="286" r="9" fill="#8f9a70" opacity=".75"/><circle cx="298" cy="496" r="9" fill="#6b7a50" opacity=".75"/><circle cx="248" cy="214" r="13" fill="#a2a886" opacity=".75"/><circle cx="383" cy="322" r="15" fill="#4a5936" opacity=".75"/><circle cx="240" cy="339" r="11" fill="#a2a886" opacity=".75"/><circle cx="401" cy="471" r="8" fill="#4a5936" opacity=".75"/><circle cx="437" cy="413" r="9" fill="#a2a886" opacity=".75"/><circle cx="255" cy="251" r="8" fill="#a2a886" opacity=".75"/><circle cx="225" cy="461" r="7" fill="#3c482c" opacity=".75"/><circle cx="223" cy="329" r="9" fill="#6b7a50" opacity=".75"/><circle cx="291" cy="235" r="14" fill="#6b7a50" opacity=".75"/><circle cx="365" cy="432" r="10" fill="#56663e" opacity=".75"/><circle cx="392" cy="475" r="14" fill="#4a5936" opacity=".75"/><circle cx="309" cy="321" r="10" fill="#4a5936" opacity=".75"/><circle cx="236" cy="217" r="7" fill="#a2a886" opacity=".75"/><circle cx="246" cy="387" r="6" fill="#6b7a50" opacity=".75"/><circle cx="255" cy="227" r="9" fill="#808c62" opacity=".75"/><circle cx="237" cy="262" r="9" fill="#8f9a70" opacity=".75"/><circle cx="277" cy="306" r="9" fill="#808c62" opacity=".75"/><circle cx="247" cy="351" r="16" fill="#4a5936" opacity=".75"/><circle cx="327" cy="222" r="6" fill="#3c482c" opacity=".75"/><circle cx="383" cy="348" r="13" fill="#6b7a50" opacity=".75"/><circle cx="227" cy="499" r="11" fill="#a2a886" opacity=".75"/><circle cx="372" cy="488" r="13" fill="#3c482c" opacity=".75"/><circle cx="435" cy="471" r="13" fill="#3c482c" opacity=".75"/><circle cx="335" cy="486" r="9" fill="#a2a886" opacity=".75"/><circle cx="338" cy="444" r="9" fill="#a2a886" opacity=".75"/><circle cx="356" cy="447" r="13" fill="#a2a886" opacity=".75"/><circle cx="398" cy="457" r="13" fill="#a2a886" opacity=".75"/><circle cx="266" cy="353" r="13" fill="#808c62" opacity=".75"/><circle cx="394" cy="346" r="7" fill="#6b7a50" opacity=".75"/><circle cx="431" cy="338" r="15" fill="#3c482c" opacity=".75"/><circle cx="430" cy="312" r="7" fill="#a2a886" opacity=".75"/><circle cx="324" cy="303" r="10" fill="#6b7a50" opacity=".75"/><circle cx="405" cy="348" r="12" fill="#56663e" opacity=".75"/><circle cx="362" cy="462" r="6" fill="#4a5936" opacity=".75"/><circle cx="393" cy="435" r="10" fill="#a2a886" opacity=".75"/><circle cx="317" cy="398" r="6" fill="#8f9a70" opacity=".75"/><circle cx="308" cy="323" r="15" fill="#8f9a70" opacity=".75"/><circle cx="257" cy="513" r="5" fill="#6b7a50" opacity=".75"/><circle cx="419" cy="453" r="7" fill="#56663e" opacity=".75"/><circle cx="352" cy="347" r="15" fill="#a2a886" opacity=".75"/><circle cx="342" cy="237" r="5" fill="#8f9a70" opacity=".75"/><circle cx="364" cy="364" r="15" fill="#4a5936" opacity=".75"/><circle cx="437" cy="257" r="15" fill="#808c62" opacity=".75"/><circle cx="277" cy="289" r="8" fill="#6b7a50" opacity=".75"/><circle cx="293" cy="369" r="14" fill="#808c62" opacity=".75"/><circle cx="420" cy="308" r="10" fill="#6b7a50" opacity=".75"/><circle cx="400" cy="360" r="14" fill="#6b7a50" opacity=".75"/><circle cx="251" cy="244" r="11" fill="#56663e" opacity=".75"/><circle cx="318" cy="254" r="5" fill="#56663e" opacity=".75"/><circle cx="255" cy="240" r="12" fill="#808c62" opacity=".75"/><circle cx="343" cy="299" r="11" fill="#6b7a50" opacity=".75"/><circle cx="327" cy="443" r="15" fill="#808c62" opacity=".75"/><circle cx="276" cy="284" r="13" fill="#6b7a50" opacity=".75"/><circle cx="321" cy="204" r="15" fill="#808c62" opacity=".75"/><circle cx="319" cy="391" r="11" fill="#6b7a50" opacity=".75"/><circle cx="265" cy="284" r="11" fill="#56663e" opacity=".75"/><circle cx="326" cy="496" r="13" fill="#3c482c" opacity=".75"/><circle cx="423" cy="481" r="7" fill="#4a5936" opacity=".75"/><circle cx="252" cy="234" r="10" fill="#808c62" opacity=".75"/><circle cx="368" cy="332" r="7" fill="#3c482c" opacity=".75"/><circle cx="393" cy="482" r="7" fill="#8f9a70" opacity=".75"/><circle cx="362" cy="312" r="8" fill="#a2a886" opacity=".75"/><circle cx="433" cy="265" r="15" fill="#4a5936" opacity=".75"/><circle cx="415" cy="247" r="12" fill="#a2a886" opacity=".75"/><circle cx="257" cy="333" r="11" fill="#3c482c" opacity=".75"/><circle cx="314" cy="309" r="6" fill="#3c482c" opacity=".75"/><circle cx="226" cy="372" r="10" fill="#808c62" opacity=".75"/>
<ellipse cx="275" cy="205" rx="25" ry="8" fill="#2e3222"/>
<ellipse cx="8" cy="300" rx="6" ry="60" fill="#3c482c"/><ellipse cx="8" cy="520" rx="6" ry="80" fill="#4a5936"/><ellipse cx="6" cy="640" rx="4" ry="50" fill="#80906a"/><ellipse cx="8" cy="420" rx="6" ry="25" fill="#a8a890"/>
</g>
<!-- tan road -->
<path d="M250 512 L300 430" stroke="#b3aa8a" stroke-width="26" fill="none"/>
<path d="M333 199 L384 199 L433 224 L433 256 Z" fill="#b9ad8c"/>
<circle cx="318" cy="418" r="31" fill="#9c9d84"/>
<!-- parcel lines thin gray -->
<g stroke="#9aa090" stroke-width="1" fill="none" opacity=".8">
<path d="M294 199 L263 266"/><path d="M344 199 L309 288"/><path d="M223 254 L402 346"/><path d="M370 323 L334 386"/><path d="M409 342 L433 428"/><path d="M226 460 L270 485"/>
</g>
<g stroke="#111" stroke-width="1.6" fill="none">
<path d="M288 199 L258 265"/><path d="M338 199 L304 287"/><path d="M223 248 L402 340 L433 330"/>
<path d="M266 271 L220 357"/><path d="M245 313 L294 388"/><path d="M220 312 L245 313"/>
<path d="M365 322 L330 385"/><path d="M386 254 L350 313"/><path d="M433 269 L401 340"/>
<path d="M404 340 L430 435"/><path d="M345 416 L433 413"/><path d="M220 396 L283 428"/>
<path d="M324 453 L402 488 L433 474"/><path d="M220 457 L267 481"/><path d="M402 488 L392 510"/>
<path d="M433 196 L400 200"/><path d="M285 452 L250 512"/>
<path d="M4 213 L13 212"/><path d="M23 199 L23.5 210"/><path d="M76.5 199 L77 210"/><path d="M129 199 L129.5 210"/><path d="M4 470 L13 480"/><path d="M4 560 L13 555"/>
</g>
<!-- laterals -->
<g stroke="#9fd21c" stroke-width="1.3" fill="none">
<path d="M322 380 L340 391"/><path d="M279 407 L343 435"/><path d="M327 315 L347 327"/><path d="M269 478 L304 496"/><path d="M398 207 L380 240"/><path d="M421 218 L410 252"/>
</g>
<path d="M280 432 L318 453" stroke="#8fd8f0" stroke-width="1.3"/>
<path d="M353 205 L344 222" stroke="#8fd8f0" stroke-width="1.3"/>
<!-- green main -->
<path d="M265 484 L417 200" stroke="#63ec1c" stroke-width="3.6" fill="none"/>
<path d="M386 199 L433 224" stroke="#63ec1c" stroke-width="3.6" fill="none"/>
<path d="M165 210 L172 199" stroke="#63ec1c" stroke-width="3.2"/><path d="M4 444 L13 452" stroke="#63ec1c" stroke-width="3.6" fill="none"/>
<!-- blue pipe -->
<path d="M318 199 L433 259" stroke="#1a6ff0" stroke-width="3.6" fill="none"/>
<path d="M293 393 A33 33 0 1 1 318 452 L287 512" stroke="#1a6ff0" stroke-width="3.4" fill="none"/>
<path d="M4 456 L13 466" stroke="#1a6ff0" stroke-width="3.4" fill="none"/><rect x="7" y="380" width="7" height="10" fill="#fff"/><path d="M4 330 L13 300 M4 560 L13 540" stroke="#c8ccc0" stroke-width="1"/>
<text x="386" y="227" transform="rotate(27 386 227)" font-size="7" font-weight="bold" fill="#2a78f0" font-family="Liberation Sans">6" PVC</text>
<text x="318" y="444" transform="rotate(-30 318 444)" font-size="7" font-weight="bold" fill="#2a78f0" font-family="Liberation Sans">6" PVC</text>
<!-- parcel labels -->
<g font-family="Liberation Sans" font-size="5" text-anchor="middle" fill="#222">
<g fill="#fff"><rect x="245" y="209" width="18" height="9"/><rect x="292" y="234" width="18" height="9"/><rect x="339" y="258" width="18" height="9"/><rect x="386" y="282" width="18" height="9"/><rect x="297" y="329" width="15" height="9"/><rect x="243" y="370" width="15" height="9"/><rect x="367" y="366" width="15" height="9"/><rect x="225" y="431" width="15" height="9"/><rect x="366" y="449" width="15" height="9"/><rect x="337" y="490" width="15" height="9"/></g>
<text x="254" y="216">1335</text><text x="301" y="241">1327</text><text x="348" y="265">1319</text><text x="395" y="289">1311</text><text x="305" y="336">125</text><text x="250" y="377">117</text><text x="375" y="373">124</text><text x="232" y="438">109</text><text x="373" y="456">116</text><text x="344" y="497">108</text>
<g fill="#fff"><circle cx="285" cy="299" r="5"/><circle cx="244" cy="356" r="5"/><circle cx="388" cy="364" r="5"/><circle cx="404" cy="449" r="5"/><circle cx="374" cy="502" r="5"/><circle cx="430" cy="477" r="5"/></g>
<text x="285" y="301">52</text><text x="244" y="358">51</text><text x="388" y="366">53</text><text x="404" y="451">54</text><text x="374" y="504">55</text>
</g>
<!-- M markers -->
<g fill="#d6e6fb" stroke="#fff" stroke-width=".8">
<circle cx="311" cy="200" r="4"/><circle cx="371" cy="230" r="4"/><circle cx="411" cy="251" r="4"/><circle cx="302" cy="385" r="4"/><circle cx="339" cy="393" r="4"/><circle cx="279" cy="432" r="4"/><circle cx="350" cy="434" r="4"/><circle cx="308" cy="479" r="4"/>
</g>
<g font-family="Liberation Sans" font-size="5" text-anchor="middle" fill="#2a6ae0" font-weight="bold">
<text x="371" y="232">M</text><text x="411" y="253">M</text><text x="302" y="387">M</text><text x="339" y="395">M</text><text x="279" y="434">M</text><text x="350" y="436">M</text><text x="308" y="481">M</text>
</g>
<g fill="#3d8a2a" stroke="#fff" stroke-width=".9">
<circle cx="341" cy="221" r="3.5"/><circle cx="379" cy="241" r="3.5"/><circle cx="405" cy="256" r="3.5"/><circle cx="327" cy="317" r="3.5"/><circle cx="339" cy="388" r="3.5"/><circle cx="279" cy="407" r="3.5"/><circle cx="281" cy="438" r="3.5"/><circle cx="350" cy="440" r="3.5"/><circle cx="257" cy="483" r="3.5"/><circle cx="306" cy="496" r="3.5"/>
</g>
<g fill="#6ef020" stroke="#1a3a10" stroke-width="1"><circle cx="313" cy="394" r="4"/><circle cx="266" cy="484" r="4"/></g>
<circle cx="296" cy="396" r="5.5" fill="none" stroke="#30e0f0" stroke-width="2"/>
<circle cx="296" cy="396" r="3.5" fill="#f4a07a" stroke="#222" stroke-width="1"/>
<circle cx="348" cy="213" r="3.5" fill="#f4a07a" stroke="#222" stroke-width="1"/>
<!-- nav button -->
<rect x="398" y="210" width="27" height="25" rx="5" fill="#3e4a34"/>
<path d="M404 224 L419 216 L412 230 L411 224 Z" fill="none" stroke="#2a9af0" stroke-width="1.3" stroke-linejoin="round"/>
</svg>
<!-- header bars -->
<div class="a" style="left:4px;top:141px;width:429px;height:39px;background:linear-gradient(90deg,#3c4032 0%,#3b3d33 30%,#363a38 55%,#3e4034 80%,#424435 100%)"></div>
<div class="a" style="left:4px;top:180px;width:429px;height:20px;background:linear-gradient(90deg,#454a39 0%,#3f4337 40%,#3a3d3a 60%,#47493a 100%)"></div>
<div class="t" style="left:8px;top:144.1px;font-size:6.95px;font-weight:bold;color:#e8e8e8">10:36 AM&nbsp;&nbsp; Tue Nov 29</div>
<div class="a" style="left:213px;top:146.5px;width:3px;height:3px;border-radius:50%;background:#cfcfcf;box-shadow:4px 0 #cfcfcf,8px 0 #cfcfcf"></div>
<div class="a" style="left:361px;top:142.5px;width:25px;height:9px;border-radius:5px;background:#1c76e8"></div>
<div class="a" style="left:371px;top:144px;width:5px;height:5px;border-radius:50%;background:#fff;box-shadow:0 0 0 .6px #e2e2e2"></div>
<svg class="a" style="left:390px;top:143px" width="8" height="8" viewBox="0 0 8 8"><path d="M1 4 L7 1 L4 7 L3.6 4.4 Z" fill="#f0f0f0"/></svg>
<div class="t" style="left:398px;top:144px;font-size:7.4px;font-weight:bold;color:#e8e8e8">44%</div>
<div class="a" style="left:415px;top:143.5px;width:14px;height:7px;border:1px solid #aaa;border-radius:2px"></div>
<div class="a" style="left:416.5px;top:145px;width:5px;height:4px;background:#f0f0f0"></div>
<svg class="a" style="left:8px;top:157px" width="14" height="16" viewBox="0 0 14 16"><path d="M10 2 L4 8 L10 14" fill="none" stroke="#1a9ff0" stroke-width="2"/></svg>
<div class="t" style="left:24.5px;top:160.2px;font-size:11.29px;color:#1a9ff0">WaterSewerFieldMapsV2</div>
<div class="t" style="left:184.5px;top:160.1px;font-size:11.21px;font-weight:bold;color:#f2f2f2">Service Area</div>
<svg class="a" style="left:296px;top:155px" width="130" height="22" viewBox="296 155 130 22">
<g fill="none" stroke="#1a9ff0" stroke-width="1.5" stroke-linecap="round" stroke-linejoin="round">
<path d="M303 158 L303 172 M299 168 L303 172 L307 168"/><path d="M312 172 L312 158 M308 162 L312 158 L316 162"/>
<path d="M344 158 L352 162 L344 166 L336 162 Z"/><path d="M336 166 L344 170 L352 166"/><path d="M336 170 L344 174 L352 170"/>
<circle cx="377" cy="163" r="5"/><path d="M381 167 L386 172"/>
</g>
<g fill="#1a9ff0"><circle cx="408" cy="165" r="1.6"/><circle cx="413.5" cy="165" r="1.6"/><circle cx="419" cy="165" r="1.6"/></g>
</svg>
<div class="t" style="left:177px;top:185.5px;font-size:8.35px;color:#9a9a96">GPS accuracy 0.1 in</div>

<!-- panel -->
<div class="a" style="left:13px;top:209px;width:209px;height:503px;background:#2c2c2e;border-radius:9px 9px 0 0"></div>
<div class="a" style="left:108px;top:212.5px;width:20px;height:2.5px;border-radius:2px;background:#5a5a5e"></div>
<svg class="a" style="left:23px;top:223px" width="18" height="18" viewBox="0 0 18 18"><g fill="#111"><circle cx="9" cy="3" r="2.3"/><circle cx="9" cy="15" r="2.3"/><circle cx="3" cy="9" r="2.3"/><circle cx="15" cy="9" r="2.3"/><circle cx="9" cy="9" r="6"/></g><circle cx="9" cy="9" r="4.8" fill="#f5a07c"/><circle cx="9" cy="9" r="1.2" fill="#111"/></svg>
<div class="t" style="left:48px;top:221.0px;font-size:10.82px;font-weight:bold;color:#f4f4f4">30-121</div>
<div class="t" style="left:48px;top:234.8px;font-size:8.55px;color:#9c9ca0">37.035281°N&nbsp; 86.375108°W</div>
<div class="a" style="left:196.5px;top:218px;width:17px;height:17px;border-radius:50%;background:#3c3c40"></div>
<svg class="a" style="left:196.5px;top:218px" width="17" height="17" viewBox="0 0 17 17"><path d="M5 5 L12 12 M12 5 L5 12" stroke="#d0d0d0" stroke-width="1.4"/></svg>
<div class="t" style="left:194px;top:236.3px;font-size:6.7px;font-weight:bold;color:#9c9ca0">4.2 mi</div>
<div class="a" style="left:13px;top:253px;width:209px;height:1px;background:#38383b"></div>
<div class="t" style="left:22px;top:261.9px;font-size:10.55px;color:#a6a6aa">Edited by</div>
<div class="t" style="left:22px;top:278.7px;font-size:11.04px;color:#f2f2f2">CHANDLERS · Jul 14, 2020</div>
<div class="a" style="left:13px;top:295px;width:209px;height:3px;background:#1e1e20"></div>
<div class="a" style="left:22px;top:309px;width:191px;height:257px;background:#fff;border-radius:6px"></div>
<!-- card text -->
<div class="t" style="left:28.6px;top:317.2px;font-size:10.3px;color:#8e8e93">Facility ID: <span style="color:#1c1c1e">30-121</span></div>
<div class="t" style="left:28.6px;top:341.8px;font-size:10.61px;color:#8e8e93">Barrel Diameter: <span style="color:#1c1c1e">5.250000</span></div>
<div class="t" style="left:28.6px;top:366.9px;font-size:10.56px;color:#8e8e93">Manufacturer: <span style="color:#1c1c1e">Mueller Company</span></div>
<div class="t" style="left:28.6px;top:392.1px;font-size:10.4px;color:#8e8e93">Flow Rate: <span style="color:#1c1c1e">571.000000</span></div>
<div class="t" style="left:28.6px;top:416.8px;font-size:10.47px;color:#8e8e93">District Source: <span style="color:#1c1c1e">Kelly Vance</span></div>
<div class="t" style="left:28.6px;top:441.9px;font-size:10.38px;color:#8e8e93">GPS Date: <span style="color:#1c1c1e">6/17/2008, 1:00 AM</span></div>
<div class="t" style="left:28.6px;top:467.0px;font-size:10.32px;color:#8e8e93">Datafile: <span style="color:#1c1c1e">KRWA1061705A.cor</span></div>
<div class="t" style="left:28.6px;top:491.7px;font-size:10.6px;color:#1a7ad6;text-decoration:underline">Hydrant Maintenance</div>
<div class="t" style="left:28.6px;top:516.8px;font-size:10.46px;color:#1a7ad6;text-decoration:underline">Hydrant Flush</div>
<div class="t" style="left:28.6px;top:541.8px;font-size:10.55px;color:#1a7ad6;text-decoration:underline">Hydrant Flow Test</div>
<!-- action rows -->
<div class="a" style="left:13px;top:576px;width:209px;height:4px;background:#1c1c1e"></div>
<div class="a" style="left:13px;top:614px;width:209px;height:4px;background:#1c1c1e"></div>
<div class="a" style="left:13px;top:652px;width:209px;height:4px;background:#1c1c1e"></div>
<div class="a" style="left:22px;top:689px;width:200px;height:1px;background:#3a3a3c"></div>
<div class="t" style="left:21.7px;top:592.5px;font-size:9.42px;color:#1a9ff0">Copy</div>
<div class="t" style="left:21.7px;top:631.0px;font-size:9.49px;color:#1a9ff0">Collect Here</div>
<div class="t" style="left:21.7px;top:668.4px;font-size:9.69px;color:#1a9ff0">Directions</div>
<div class="t" style="left:21.7px;top:702.0px;font-size:9.44px;color:#1a9ff0">Compass</div>

<!-- survey -->
<div class="a" style="left:156px;top:507.5px;width:405px;height:540px;background:#f3f3f3;box-shadow:14px 14px 50px rgba(0,0,0,.7)"></div>
<div class="a" style="left:156px;top:507.5px;width:405px;height:11px;background:#000"></div>
<div class="t" style="left:159.5px;top:510.5px;font-size:6.52px;font-weight:bold;color:#e6e6e6">◀ Field Maps&nbsp;&nbsp; 10:33 AM&nbsp;&nbsp; Tue Nov 29</div>
<div class="a" style="left:354px;top:513px;width:2.5px;height:2.5px;border-radius:50%;background:#aaa;box-shadow:3.5px 0 #aaa,7px 0 #aaa"></div>
<svg class="a" style="left:500px;top:509px" width="60" height="9" viewBox="500 509 60 9">
<path d="M501 513 L505 510.5 L503.3 515.5 L503 513.3 Z" fill="#eee"/>
<g fill="#eee"><rect x="507" y="514" width="1.2" height="2"/><rect x="509" y="513" width="1.2" height="3"/><rect x="511" y="512" width="1.2" height="4"/><rect x="513" y="511" width="1.2" height="5"/></g>
<path d="M516 512.5 Q519.5 509.5 523 512.5 M517.2 513.7 Q519.5 511.7 521.8 513.7" stroke="#eee" stroke-width="1" fill="none"/><circle cx="519.5" cy="515" r=".8" fill="#eee"/>
<rect x="545" y="510.5" width="11" height="5.5" rx="1.3" fill="none" stroke="#bbb" stroke-width=".8"/><rect x="546.2" y="511.6" width="4.5" height="3.3" fill="#eee"/>
</svg>
<div class="t" style="left:528.5px;top:510.1px;font-size:6.99px;font-weight:bold;color:#e6e6e6">45%</div>
<div class="a" style="left:156px;top:518.3px;width:405px;height:25.5px;background:#2e8431"></div>
<svg class="a" style="left:160px;top:525px" width="14" height="14" viewBox="0 0 14 14"><path d="M2 2 L12.5 12.5 M12.5 2 L2 12.5" stroke="#e8f2e8" stroke-width="1.2"/></svg>
<div class="t" style="left:331.3px;top:526.7px;font-size:11.37px;color:#e8f2e8">My Survey</div>
<svg class="a" style="left:516px;top:524px" width="18" height="16" viewBox="0 0 18 16"><g stroke="#e8f2e8" stroke-width="1.1" fill="none"><path d="M3 9 Q5 13 9 14"/><path d="M4.5 8 Q6 11.5 9 12"/><path d="M6 7.5 Q7 9.5 9 10"/></g><path d="M8 8 L14 2 M10 3 L13 6 M12 1 L16 5" stroke="#e8f2e8" stroke-width="2"/></svg>
<svg class="a" style="left:544px;top:526px" width="13" height="12" viewBox="0 0 13 12"><path d="M0 1.5 H12 M0 6 H12 M0 10.5 H12" stroke="#e8f2e8" stroke-width="1"/></svg>
<!-- form -->
<div class="t" style="left:162.6px;top:551.8px;font-size:8.5px;color:#444">Test Type <span style="color:#d02020">*</span></div>
<div class="a" style="left:162px;top:564px;width:13.8px;height:13.8px;border-radius:50%;background:#fff;border:1px solid #6f9ae0"></div>
<div class="a" style="left:162px;top:580.8px;width:13.8px;height:13.8px;border-radius:50%;background:#fff;box-shadow:0 0 0 .6px #e2e2e2"></div>
<div class="a" style="left:166.2px;top:585px;width:5.4px;height:5.4px;border-radius:50%;background:#000"></div>
<div class="a" style="left:162px;top:597.7px;width:13.8px;height:13.8px;border-radius:50%;background:#fff;box-shadow:0 0 0 .6px #e2e2e2"></div>
<div class="a" style="left:162px;top:614.5px;width:13.8px;height:13.8px;border-radius:50%;background:#fff;box-shadow:0 0 0 .6px #e2e2e2"></div>
<div class="t" style="left:178.9px;top:567.0px;font-size:8.1px;color:#444">Single Hydrant</div>
<div class="t" style="left:178.9px;top:583.9px;font-size:8.09px;color:#444">Two Hydrant</div>
<div class="t" style="left:178.9px;top:600.6px;font-size:8.1px;color:#444">Two Hydrant, Two Nozzle</div>
<div class="t" style="left:178.9px;top:617.4px;font-size:8.11px;color:#444">Three Hydrant</div>
<div class="t" style="left:162.6px;top:641.1px;font-size:8.5px;color:#444">Flow Hydrant 1 <span style="color:#d02020">*</span></div>
<div class="t" style="left:162.6px;top:654.1px;font-size:7.74px;color:#444">10-001</div>
<div class="t" style="left:162.6px;top:674.8px;font-size:8.46px;color:#444">Residual Hydrant</div>
<div class="t" style="left:162.6px;top:717.6px;font-size:8.49px;color:#444">District Source</div>
<div class="t" style="left:162.6px;top:760.4px;font-size:8.5px;color:#444">Nozzle Size <span style="color:#d02020">*</span></div>
<div class="a" style="left:162px;top:771.8px;width:13.8px;height:13.8px;border-radius:50%;background:#fff;box-shadow:0 0 0 .6px #e2e2e2"></div>
<div class="a" style="left:162px;top:788.7px;width:13.8px;height:13.8px;border-radius:50%;background:#fff;box-shadow:0 0 0 .6px #e2e2e2"></div>
<div class="a" style="left:162px;top:805.8px;width:13.8px;height:13.8px;border-radius:50%;background:#fff;box-shadow:0 0 0 .6px #e2e2e2"></div>
<div class="a" style="left:166.2px;top:810px;width:5.4px;height:5.4px;border-radius:50%;background:#000"></div>
<div class="t" style="left:179px;top:775.3px;font-size:7.6px;color:#444">2"</div>
<div class="t" style="left:179px;top:791.5px;font-size:8.43px;color:#444">1.75"</div>
<div class="t" style="left:179px;top:808.6px;font-size:8.33px;color:#444">1.125"</div>
<div class="t" style="left:162.2px;top:832.2px;font-size:8.5px;color:#444">Static Pressure <span style="color:#d02020">*</span></div>
<div class="t" style="left:162.2px;top:874.8px;font-size:8.5px;color:#444">Residual Pressure <span style="color:#d02020">*</span></div>
<div class="t" style="left:162.2px;top:917.5px;font-size:8.5px;color:#444">Nozzle Pressure <span style="color:#d02020">*</span></div>
<div class="t" style="left:162.2px;top:960.2px;font-size:8.5px;color:#444">Minutes Flushed <span style="color:#d02020">*</span></div>
<div class="t" style="left:162.2px;top:1003.2px;font-size:8.5px;color:#444">Inspected Date <span style="color:#d02020">*</span></div>
<div class="a" style="left:162.5px;top:687.2px;width:391.5px;height:17.6px;background:#fff;border:1px solid #e6e6e6"></div>
<div class="a" style="left:162.5px;top:730px;width:391.5px;height:17.6px;background:#fff;border:1px solid #e6e6e6"></div>
<div class="a" style="left:162.5px;top:845px;width:391.5px;height:17.2px;background:#fff;border:1px solid #e6e6e6"></div>
<div class="a" style="left:162.5px;top:887.4px;width:391.5px;height:17.2px;background:#fff;border:1px solid #e6e6e6"></div>
<div class="a" style="left:162.5px;top:929.8px;width:391.5px;height:17.5px;background:#fff;border:1px solid #e6e6e6"></div>
<div class="a" style="left:162.5px;top:972.7px;width:391.5px;height:17.8px;background:#fff;border:1px solid #e6e6e6"></div>
<div class="a" style="left:162.5px;top:1015.4px;width:391.5px;height:7.4px;background:#fff;border:1px solid #e6e6e6;border-bottom:0;overflow:hidden">
<div class="a" style="left:4px;top:3px;width:9px;height:8px;border:1px solid #777"></div>
<div style="position:absolute;left:18px;top:3px;font-size:7.6px;line-height:1;color:#666;white-space:nowrap">Tuesday, November 29, 2022</div>
<div class="a" style="left:319px;top:0;width:1px;height:8px;background:#e6e6e6"></div>
<div class="a" style="left:325px;top:3px;width:8px;height:8px;border:1px solid #777;border-radius:50%"></div>
<div style="position:absolute;left:338px;top:3px;font-size:7.6px;line-height:1;color:#666;white-space:nowrap">10:33 AM</div>
</div>
<div class="t" style="left:166.7px;top:692.2px;font-size:8.1px;color:#333">10-003</div>
<div class="t" style="left:166.7px;top:734.8px;font-size:8.09px;color:#333">BG North</div>
<div class="t" style="left:166.7px;top:849.9px;font-size:7.6px;color:#333">74</div>
<div class="t" style="left:166.7px;top:892.3px;font-size:7.6px;color:#333">46</div>
<div class="t" style="left:166.7px;top:934.9px;font-size:7.6px;color:#333">18</div>
<div class="t" style="left:166.7px;top:977.9px;font-size:7.6px;color:#333">2</div>
<svg class="a" style="left:0;top:0" width="600" height="1080" viewBox="0 0 600 1080">
<g fill="none" stroke="#555" stroke-width=".8">
<circle cx="545.2" cy="696.3" r="4.3"/><path d="M543.3 694.4 L547.1 698.2 M547.1 694.4 L543.3 698.2"/>
<circle cx="545.2" cy="739" r="4.3"/><path d="M543.3 737.1 L547.1 740.9 M547.1 737.1 L543.3 740.9"/>
<circle cx="545.3" cy="853.3" r="4.3"/><path d="M543.4 851.4 L547.2 855.2 M547.2 851.4 L543.4 855.2"/>
<circle cx="545.3" cy="896" r="4.3"/><path d="M543.4 894.1 L547.2 897.9 M547.2 894.1 L543.4 897.9"/>
<circle cx="545.3" cy="938.7" r="4.3"/><path d="M543.4 936.8 L547.2 940.6 M547.2 936.8 L543.4 940.6"/>
<circle cx="545.3" cy="981.3" r="4.3"/><path d="M543.4 979.4 L547.2 983.2 M547.2 979.4 L543.4 983.2"/>
</g>
<path d="M544 1037 L547.5 1041 L556 1031.5" fill="none" stroke="#333" stroke-width="1"/>
</svg>
<div class="a" style="left:156px;top:1022px;width:405px;height:1.8px;background:#4f9f4f"></div>
</body></html>
